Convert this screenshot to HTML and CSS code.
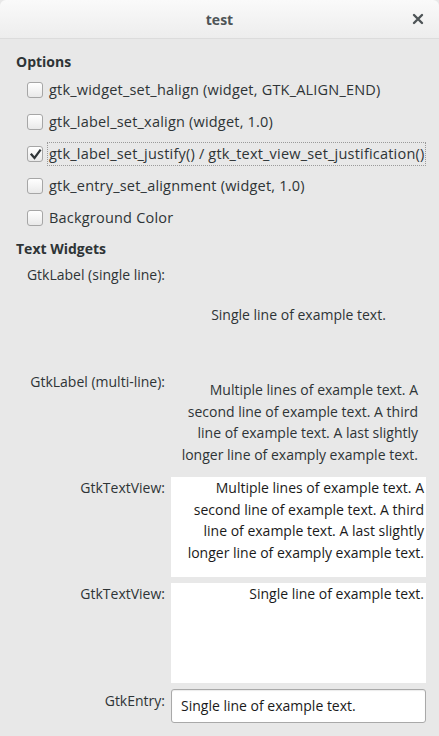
FILE: index.html
```html
<!DOCTYPE html>
<html>
<head>
<meta charset="utf-8">
<link rel="stylesheet" href="styles.css">
</head>
<body>
<div class="window">
  <header class="titlebar">
    <span class="spacer"></span>
    <span class="title">test</span>
    <span class="close">
      <svg width="12" height="12" viewBox="0 0 12 12"><path d="M2 2 L10 10 M10 2 L2 10" stroke="#4e5457" stroke-width="2.4" stroke-linecap="round"/></svg>
    </span>
  </header>
  <main class="content">
    <h2 class="section">Options</h2>
    <div class="options">
      <label class="opt"><span class="box"></span><span class="optlabel">gtk_widget_set_halign (widget, GTK_ALIGN_END)</span></label>
      <label class="opt"><span class="box"></span><span class="optlabel">gtk_label_set_xalign (widget, 1.0)</span></label>
      <label class="opt"><span class="box checked"><svg width="13" height="13" viewBox="0 0 13 13"><path d="M2.5 6.5 L5.5 10 L11 2.5" fill="none" stroke="#2e3436" stroke-width="2.2" stroke-linecap="square"/></svg></span><span class="optlabel focus">gtk_label_set_justify() / gtk_text_view_set_justification()</span></label>
      <label class="opt"><span class="box"></span><span class="optlabel">gtk_entry_set_alignment (widget, 1.0)</span></label>
      <label class="opt"><span class="box"></span><span class="optlabel">Background Color</span></label>
    </div>
    <h2 class="section section2">Text Widgets</h2>
    <div class="grid">
      <div class="lbl">GtkLabel (single line):</div>
      <div class="val single">Single line of example text.</div>

      <div class="lbl">GtkLabel (multi-line):</div>
      <div class="val multi">Multiple lines of example text. A<br>second line of example text. A third<br>line of example text. A last slightly<br>longer line of examply example text.</div>

      <div class="lbl">GtkTextView:</div>
      <div class="val textview">Multiple lines of example text. A<br>second line of example text. A third<br>line of example text. A last slightly<br>longer line of examply example text.</div>

      <div class="lbl">GtkTextView:</div>
      <div class="val textview">Single line of example text.</div>

      <div class="lbl lbl-entry">GtkEntry:</div>
      <div class="val entry">Single line of example text.</div>
    </div>
  </main>
</div>
</body>
</html>
```

FILE: styles.css
```css
* { box-sizing: border-box; }
html, body { margin: 0; padding: 0; }
body {
  width: 439px;
  height: 736px;
  overflow: hidden;
  font-family: "Open Sans", "Noto Sans", sans-serif;
  font-size: 14px;
  color: #2e3436;
  background: #e8e8e8;
}
.window {
  height: 736px;
  display: flex;
  flex-direction: column;
  background: #e8e8e8;
}
.titlebar {
  height: 39px;
  flex: none;
  display: grid;
  grid-template-columns: 1fr auto 1fr;
  align-items: center;
  background: linear-gradient(#fafafa, #ededed);
  border-bottom: 1px solid #dcdcdc;
  border-radius: 6px 6px 0 0;
}
.title {
  font-weight: bold;
  font-size: 14px;
  color: #4e5457;
}
.close {
  justify-self: end;
  margin-right: 15px;
  display: flex;
  align-items: center;
}
.content {
  padding: 12px 13px 0 16px;
}
.section {
  margin: 0;
  font-size: 14px;
  font-weight: bold;
  line-height: 22px;
  color: #2e3436;
}
.options {
  display: flex;
  flex-direction: column;
  padding-left: 11px;
  margin-top: 1px;
}
.opt {
  height: 32px;
  display: flex;
  align-items: center;
  gap: 4px;
}
.box {
  width: 16px;
  height: 16px;
  border: 1px solid #a6a6a6;
  border-radius: 3px;
  background: linear-gradient(#ffffff, #e9e9e9);
  display: flex;
  align-items: center;
  justify-content: center;
  flex: none;
}
.optlabel {
  font-size: 14.5px;
  letter-spacing: 0.2px;
  line-height: 22px;
  padding: 0 1px;
  border: 1px dotted transparent;
  white-space: nowrap;
}
.optlabel.focus {
  border-color: #9a9a9a;
}
.section2 {
  margin-top: 4px;
}
.grid {
  display: grid;
  grid-template-columns: 149px 255px;
  column-gap: 6px;
  grid-template-rows: 101px 100px 100px 100px 34px;
  row-gap: 6px;
  margin-top: 4px;
}
.lbl {
  text-align: right;
  line-height: 20px;
  padding-top: 1px;
  white-space: nowrap;
}
.val {
  text-align: right;
  line-height: 21.5px;
}
.single {
  text-align: center;
  align-self: center;
}
.multi {
  padding-top: 8px;
  padding-right: 8px;
}
.textview {
  background: #ffffff;
  color: #1a1a1a;
  padding: 0 2px 0 4px;
}
.entry {
  background: #ffffff;
  border: 1px solid #a9a9a9;
  border-radius: 3px;
  text-align: left;
  padding: 0 9px;
  line-height: 32px;
  color: #1a1a1a;
  box-shadow: inset 0 1px 1px rgba(0,0,0,0.08);
}
.lbl-entry {
  padding-top: 2px;
}
```
